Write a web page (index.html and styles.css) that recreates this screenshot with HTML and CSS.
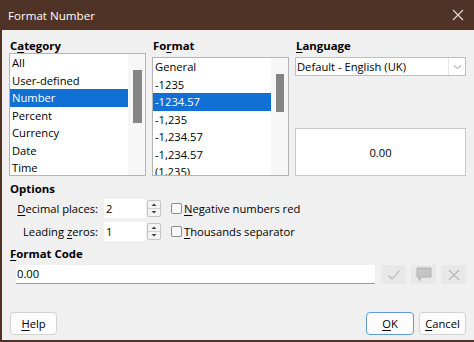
FILE: index.html
```html
<!DOCTYPE html>
<html>
<head>
<meta charset="utf-8">
<link rel="stylesheet" href="styles.css">
</head>
<body>
<div class="window">
  <div class="titlebar">
    <span class="title">Format Number</span>
    <svg class="close" width="12" height="12" viewBox="0 0 12 12"><path d="M1 1L11 11M11 1L1 11" stroke="#e8dcd6" stroke-width="1.1" fill="none"/></svg>
  </div>
  <div class="content">
    <div class="top">
      <div class="col">
        <div class="label">C<u>a</u>tegory</div>
        <div class="list list-cat">
          <div class="items">
            <div class="item">All</div>
            <div class="item">User-defined</div>
            <div class="item sel">Number</div>
            <div class="item">Percent</div>
            <div class="item">Currency</div>
            <div class="item">Date</div>
            <div class="item">Time</div>
          </div>
          <div class="sbar"><div class="thumb thumb-cat"></div></div>
        </div>
      </div>
      <div class="col">
        <div class="label">Fo<u>r</u>mat</div>
        <div class="list list-fmt">
          <div class="items">
            <div class="item">General</div>
            <div class="item">-1235</div>
            <div class="item sel">-1234.57</div>
            <div class="item">-1,235</div>
            <div class="item">-1,234.57</div>
            <div class="item">-1,234.57</div>
            <div class="item">(1,235)</div>
          </div>
          <div class="sbar"><div class="thumb thumb-fmt"></div></div>
        </div>
      </div>
      <div class="col col-lang">
        <div class="label"><u>L</u>anguage</div>
        <div class="dropdown">
          <span class="dd-text">Default - English (UK)</span>
          <span class="dd-arrow"><svg width="9" height="6" viewBox="0 0 9 6"><path d="M1 1.5L4.5 4.5L8 1.5" stroke="#9a9a9a" stroke-width="1" fill="none"/></svg></span>
        </div>
        <div class="preview">0.00</div>
      </div>
    </div>

    <div class="label opt-label">Options</div>
    <div class="options">
      <div class="opt-name"><u>D</u>ecimal places:</div>
      <div class="spin-input">2</div>
      <div class="spinner"><svg width="14" height="17" viewBox="0 0 14 17"><rect x="0.5" y="0.5" width="13" height="16" rx="1.5" fill="#f4f4f4" stroke="#c4c4c4"/><line x1="1" y1="8.5" x2="13" y2="8.5" stroke="#d0d0d0"/><path d="M4.5 6L7 3.5L9.5 6Z" fill="#404040"/><path d="M4.5 11L7 13.5L9.5 11Z" fill="#404040"/></svg></div>
      <label class="check"><span class="box"></span><span><u>N</u>egative numbers red</span></label>

      <div class="opt-name">Leading <u>z</u>eros:</div>
      <div class="spin-input">1</div>
      <div class="spinner"><svg width="14" height="17" viewBox="0 0 14 17"><rect x="0.5" y="0.5" width="13" height="16" rx="1.5" fill="#f4f4f4" stroke="#c4c4c4"/><line x1="1" y1="8.5" x2="13" y2="8.5" stroke="#d0d0d0"/><path d="M4.5 6L7 3.5L9.5 6Z" fill="#404040"/><path d="M4.5 11L7 13.5L9.5 11Z" fill="#404040"/></svg></div>
      <label class="check"><span class="box"></span><span><u>T</u>housands separator</span></label>
    </div>

    <div class="label code-label"><u>F</u>ormat Code</div>
    <div class="code-row">
      <div class="code-input">0.00</div>
      <div class="tool"><svg width="14" height="12" viewBox="0 0 14 12"><path d="M1.5 6.5L5 10L12.5 1.5" stroke="#b4b4b4" stroke-width="1.1" fill="none"/></svg></div>
      <div class="tool"><svg width="16" height="15" viewBox="0 0 16 15"><path d="M1 1H15V10H6L3 13.5V10H1Z" fill="#c4c4c4" stroke="#b0b0b0" stroke-width="1" stroke-linejoin="round"/></svg></div>
      <div class="tool"><svg width="12" height="12" viewBox="0 0 12 12"><path d="M1 1L11 11M11 1L1 11" stroke="#b4b4b4" stroke-width="1.1" fill="none"/></svg></div>
    </div>

    <div class="buttons">
      <button class="btn"><u>H</u>elp</button>
      <div class="spacer"></div>
      <button class="btn btn-ok"><u>O</u>K</button>
      <button class="btn"><u>C</u>ancel</button>
    </div>
  </div>
</div>
</body>
</html>
```
FILE: styles.css
```css
* { box-sizing: border-box; }
html, body { margin: 0; padding: 0; }
body {
  width: 474px;
  height: 342px;
  overflow: hidden;
  background: #4e3326;
  font-family: "Open Sans", "Noto Sans", sans-serif;
  font-size: 11.2px;
  color: #000;
}
u { text-decoration: underline; text-underline-offset: 1.5px; text-decoration-thickness: 1px; }

.window {
  width: 474px;
  height: 340px;
  background: #f0f0f0;
  border-left: 2px solid #4e3326;
  display: flex;
  flex-direction: column;
}
.titlebar {
  height: 30px;
  background: #4e3326;
  margin-left: -2px;
  display: flex;
  align-items: center;
  justify-content: space-between;
  padding: 0 10px 0 8px;
  color: #fff;
}
.title { font-size: 11.6px; }
.close { display: block; }

.content {
  flex: 1;
  padding: 8px 8px 0 7px;
  display: flex;
  flex-direction: column;
}
.label {
  font-weight: 700;
  line-height: 15px;
  height: 15px;
  padding-left: 1px;
  font-size: 11.4px;
}
.top {
  display: grid;
  grid-template-columns: 137px 137px 171px;
  column-gap: 6px;
}
.col { display: flex; flex-direction: column; }
.list {
  background: #fff;
  border: 1px solid #b4b4b4;
  display: flex;
  overflow: hidden;
}
.list-cat { height: 123px; }
.list-fmt { height: 119px; margin-top: 4px; }
.items { width: 118px; }
.item {
  height: 17.5px;
  line-height: 17.5px;
  padding-left: 2px;
  white-space: nowrap;
}
.item.sel { background: #1070d4; color: #fff; }
.sbar { width: 17px; background: #f7f7f7; }
.thumb { background: #858585; }
.thumb-cat { width: 9px; height: 53px; margin: 16px 0 0 5px; }
.thumb-fmt { width: 8px; height: 38px; margin: 16px 0 0 5px; }

.col-lang { justify-content: flex-start; }
.dropdown {
  margin-top: 4px;
  height: 19px;
  background: #fff;
  border: 1px solid #c0c0c0;
  display: flex;
  align-items: center;
}
.dd-text { flex: 1; padding-left: 1px; white-space: nowrap; }
.dd-arrow {
  width: 17px;
  height: 100%;
  border-left: 1px solid #e6e6e6;
  display: flex;
  align-items: center;
  justify-content: center;
}
.preview {
  margin-top: auto;
  height: 48px;
  background: #fff;
  border: 1px solid #c8c8c8;
  display: flex;
  align-items: center;
  justify-content: center;
}

.opt-label { margin-top: 5px; }
.options {
  margin-top: 3px;
  display: grid;
  grid-template-columns: 95px 42px 16px auto;
  grid-auto-rows: 19px;
  row-gap: 4px;
  align-items: center;
}
.opt-name { text-align: right; padding-right: 6px; white-space: nowrap; }
.spin-input {
  height: 19px;
  line-height: 19px;
  background: #fff;
  padding-left: 2px;
}
.spinner { display: flex; align-items: center; justify-content: center; height: 19px; }
.spinner svg { display: block; }
.check { display: flex; align-items: center; margin-left: 9px; white-space: nowrap; }
.box {
  width: 11px;
  height: 11px;
  border: 1px solid #8c8c8c;
  border-radius: 2px;
  background: #fafafa;
  margin-right: 2px;
}

.code-label { margin-top: 5px; }
.code-row {
  margin-top: 4px;
  display: flex;
  height: 19px;
  gap: 5px;
}
.code-input {
  flex: 1;
  margin-left: 7px;
  margin-right: 1px;
  background: #fff;
  border-bottom: 1px solid #9a9a9a;
  line-height: 18px;
  padding-left: 1px;
}
.tool {
  width: 25px;
  background: #e8e8e8;
  display: flex;
  align-items: center;
  justify-content: center;
}

.buttons {
  margin-top: 28px;
  display: flex;
  gap: 5px;
  padding-left: 1px;
}
.spacer { flex: 1; }
.btn {
  font-family: inherit;
  font-size: 11.2px;
  height: 23px;
  width: 47px;
  padding: 0;
  background: #fdfdfd;
  border: 1px solid #d2d2d2;
  border-radius: 4px;
  color: #000;
}
.btn-ok { border-color: #5f9ad8; width: 48px; }
```
